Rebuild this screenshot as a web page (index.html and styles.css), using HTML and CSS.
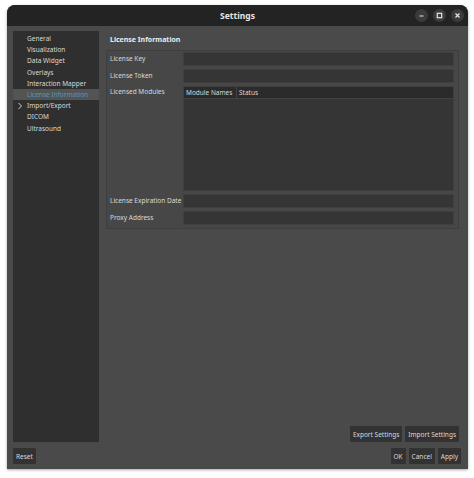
FILE: index.html
```html
<!DOCTYPE html>
<html>
<head>
<meta charset="utf-8">
<link rel="stylesheet" href="styles.css">
</head>
<body>
<div class="window">
  <div class="titlebar">
    <div></div>
    <div class="title">Settings</div>
    <div class="controls">
      <span class="ctl"><svg width="13" height="13" viewBox="0 0 13 13"><line x1="4.5" y1="7" x2="8.5" y2="7" stroke="#e6e6e6" stroke-width="1.2"/></svg></span>
      <span class="ctl"><svg width="13" height="13" viewBox="0 0 13 13"><rect x="4.3" y="4.3" width="4.4" height="4.4" fill="none" stroke="#e6e6e6" stroke-width="1.2"/></svg></span>
      <span class="ctl"><svg width="13" height="13" viewBox="0 0 13 13"><path d="M4.5 4.5 L8.5 8.5 M8.5 4.5 L4.5 8.5" stroke="#e6e6e6" stroke-width="1.2"/></svg></span>
    </div>
  </div>
  <div class="content">
    <div class="main">
      <ul class="sidebar">
        <li>General</li>
        <li>Visualization</li>
        <li>Data Widget</li>
        <li>Overlays</li>
        <li>Interaction Mapper</li>
        <li class="selected">License Information</li>
        <li><svg class="chev" width="6" height="8" viewBox="0 0 6 8"><path d="M1.5 1 L4.5 4 L1.5 7" fill="none" stroke="#d0d0d0" stroke-width="1"/></svg>Import/Export</li>
        <li>DICOM</li>
        <li>Ultrasound</li>
      </ul>
      <div class="panel">
        <div class="heading">License Information</div>
        <div class="group">
          <div class="label">License Key</div>
          <div class="field"></div>
          <div class="label">License Token</div>
          <div class="field"></div>
          <div class="label top">Licensed Modules</div>
          <div class="table">
            <div class="thead">
              <div class="th c1">Module Names</div>
              <div class="th c2">Status</div>
            </div>
          </div>
          <div class="label">License Expiration Date</div>
          <div class="field"></div>
          <div class="label">Proxy Address</div>
          <div class="field"></div>
        </div>
        <div class="panel-actions">
          <button class="btn">Export Settings</button>
          <button class="btn">Import Settings</button>
        </div>
      </div>
    </div>
    <div class="footer">
      <button class="btn">Reset</button>
      <div class="footer-right">
        <button class="btn">OK</button>
        <button class="btn">Cancel</button>
        <button class="btn">Apply</button>
      </div>
    </div>
  </div>
</div>
</body>
</html>
```
FILE: styles.css
```css
* { box-sizing: border-box; }
html, body { margin: 0; padding: 0; background: #ffffff; }
body {
  width: 474px;
  height: 478px;
  font-family: "Noto Sans", "Open Sans", sans-serif;
  font-size: 6.5px;
  color: #d9d9d9;
  overflow: hidden;
}
.window {
  margin: 5px 6px 0 7px;
  width: 461px;
  height: 464px;
  background: #4a4a4a;
  border-radius: 8px 8px 0 0;
  box-shadow: 0 1px 3px rgba(0,0,0,0.35);
  display: flex;
  flex-direction: column;
  overflow: hidden;
}
.titlebar {
  height: 21px;
  flex: none;
  background: #232323;
  display: grid;
  grid-template-columns: 1fr auto 1fr;
  align-items: center;
}
.title {
  font-weight: bold;
  font-size: 8.5px;
  color: #e6e6e6;
}
.controls {
  display: flex;
  justify-content: flex-end;
  gap: 5px;
  padding-right: 4px;
}
.ctl {
  width: 13px;
  height: 13px;
  border-radius: 50%;
  background: #3b3b3b;
  display: flex;
}
.content {
  flex: 1;
  display: flex;
  flex-direction: column;
  padding: 5px 7px 5px 6px;
  gap: 6px;
  min-height: 0;
}
.main {
  flex: 1;
  display: flex;
  gap: 7px;
  min-height: 0;
}
.sidebar {
  list-style: none;
  margin: 0;
  padding: 2px 0 0 0;
  width: 86px;
  flex: none;
  background: #2f2f2f;
}
.sidebar li {
  height: 11.2px;
  line-height: 11.2px;
  padding-left: 14px;
  position: relative;
  white-space: nowrap;
}
.sidebar li.selected {
  background: #545454;
  color: #5597bd;
}
.chev {
  position: absolute;
  left: 4px;
  top: 2px;
}
.panel {
  flex: 1;
  display: flex;
  flex-direction: column;
  min-width: 0;
  padding-right: 2px;
}
.heading {
  font-weight: bold;
  font-size: 7px;
  padding: 4px 0 0 4px;
  height: 19px;
  color: #ececec;
}
.group {
  background: #474747;
  border: 1px solid #3e3e3e;
  padding: 1px 4px 3px 3px;
  display: grid;
  grid-template-columns: 73px 1fr;
  grid-template-rows: 14px 14px 105px 14px 14px;
  row-gap: 3px;
}
.label {
  line-height: 14px;
  white-space: nowrap;
}
.label.top { line-height: 12px; }
.field {
  background: #353535;
  border: 1px solid #3f3f3f;
}
.table {
  background: #353535;
  border: 1px solid #3f3f3f;
}
.thead {
  display: flex;
  height: 12px;
  background: #2b2b2b;
  border-bottom: 1px solid #424242;
}
.th {
  line-height: 11px;
  padding-left: 2px;
}
.c1 { width: 53px; border-right: 1px solid #424242; }
.c2 { flex: 1; }
.panel-actions {
  margin-top: auto;
  display: flex;
  justify-content: flex-end;
  gap: 3px;
}
.btn {
  font-family: inherit;
  font-size: 6.5px;
  color: #d9d9d9;
  background: #323232;
  border: none;
  border-radius: 1px;
  height: 16px;
  padding: 0 3px;
  margin: 0;
}
.footer {
  display: flex;
  justify-content: space-between;
  align-items: center;
  height: 16px;
  flex: none;
}
.footer-right {
  display: flex;
  gap: 3px;
}
```
